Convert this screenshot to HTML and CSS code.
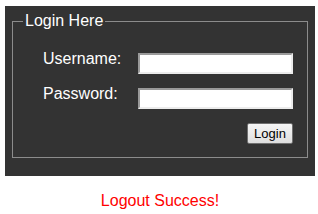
FILE: index.html
```html
<!DOCTYPE html>
<html lang="en">
<head>
  <meta charset="UTF-8">
  <title>Login</title>
  <link rel="stylesheet" href="styles.css">
</head>
<body>
  <div class="login-box">
    <form class="login-form">
      <fieldset>
        <legend>Login Here</legend>
        <div class="login-grid">
          <label for="username">Username:</label>
          <input type="text" id="username" name="username">
          <label for="password">Password:</label>
          <input type="password" id="password" name="password">
          <div class="actions">
            <button type="submit" class="login-btn">Login</button>
          </div>
        </div>
      </fieldset>
    </form>
  </div>
  <div class="message">Logout Success!</div>
</body>
</html>
```

FILE: styles.css
```css
body {
  margin: 0;
  padding: 6px 0 0 5px;
  background-color: #fff;
  font-family: "Liberation Sans", Arial, sans-serif;
  font-size: 16px;
}

.login-box {
  box-sizing: border-box;
  width: 310px;
  padding: 6px 7px 18px 7px;
  background-color: #333;
  color: #fff;
}

.login-form {
  margin: 0;
}

fieldset {
  margin: 0;
  padding: 23px 14px 13px 10px;
  border: 1px solid #8c8c8c;
}

legend {
  padding: 0 2px;
  font-size: 16px;
  line-height: 18px;
}

.login-grid {
  display: grid;
  grid-template-columns: 97px 155px;
  column-gap: 18px;
  row-gap: 14px;
}

.login-grid label {
  padding-left: 20px;
  line-height: 16px;
  margin-top: -2px;
}

.login-grid input {
  box-sizing: border-box;
  width: 155px;
  height: 21px;
  margin: 0;
  padding: 1px 3px;
  border: 2px solid;
  border-color: #9a9a9a #ececec #ececec #9a9a9a;
  background-color: #fff;
  font-family: inherit;
  font-size: 13px;
}

.actions {
  grid-column: 1 / span 2;
  display: flex;
  justify-content: flex-end;
}

.login-btn {
  box-sizing: border-box;
  width: 46px;
  height: 21px;
  margin: 0;
  padding: 0;
  border: 1px solid #707070;
  border-radius: 2px;
  background: linear-gradient(#f6f6f6, #dedede);
  color: #000;
  font-family: inherit;
  font-size: 13px;
  cursor: pointer;
}

.message {
  width: 310px;
  margin-top: 16px;
  text-align: center;
  color: #f00;
}
```
